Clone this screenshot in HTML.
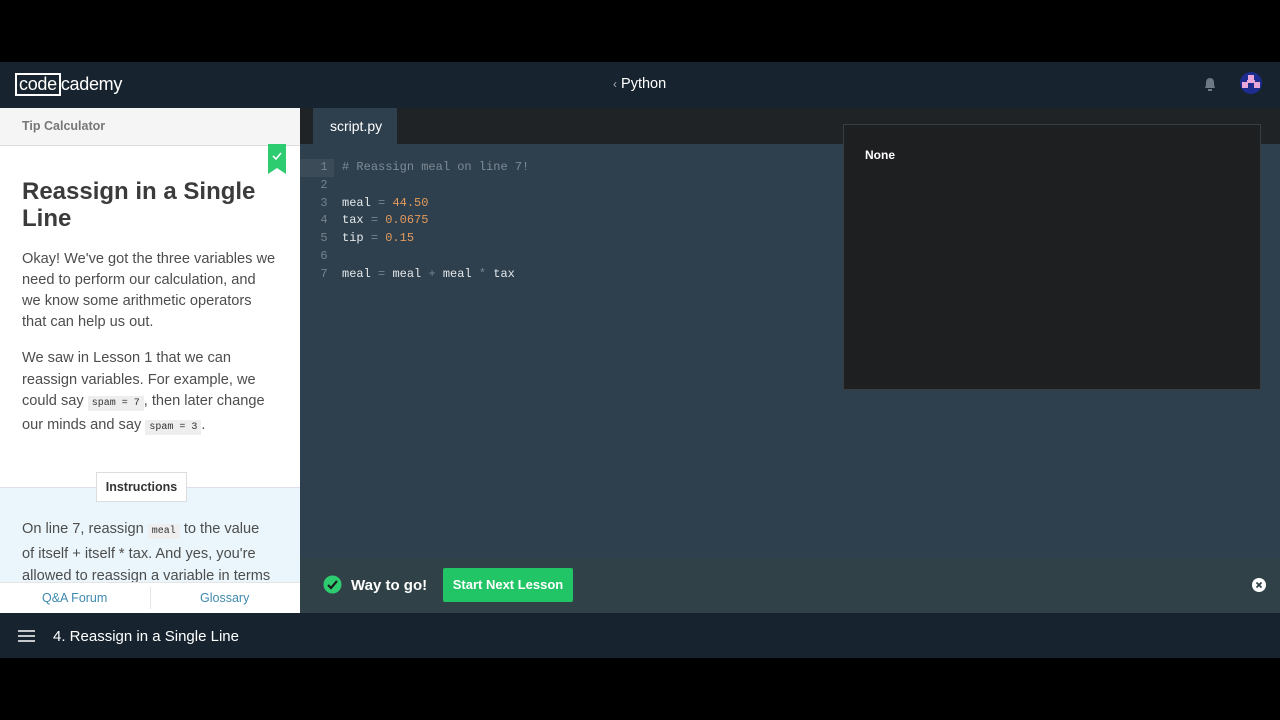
<!DOCTYPE html>
<html><head><meta charset="utf-8"><style>
*{margin:0;padding:0;box-sizing:border-box}
body{width:1280px;height:720px;background:#000;position:relative;overflow:hidden;font-family:"Liberation Sans",sans-serif}
.abs{position:absolute}
.mono{font-family:"Liberation Mono",monospace}
p.t{font-size:14.6px;line-height:21px;color:#4d4d4d;white-space:nowrap}
code{font-family:"Liberation Mono",monospace;font-size:10px;background:#eee;padding:2px 4px;color:#333}
</style></head><body>
<div class="abs" style="left:0;top:62px;width:1280px;height:46px;background:#17232f"></div>
<div class="abs" style="left:15px;top:73px;height:23px;font-size:18px;color:#fff;letter-spacing:-0.3px"><span style="border:2px solid #fff;padding:0 2px;line-height:19px;display:inline-block">code</span>cademy</div>
<div class="abs" style="left:613px;top:76px;color:#fff;font-size:14.5px"><span style="color:#aab;font-size:12px">‹</span> Python</div>
<svg class="abs" style="left:1203px;top:77px" width="14" height="15"><path d="M2 11 Q3 9 3 6 Q3 1 7 1 Q11 1 11 6 Q11 9 12 11 Z M5 12 h4 v2 h-4z" fill="#6d7a85"/></svg>
<div class="abs" style="left:1240px;top:72px;width:22px;height:22px;border-radius:50%;background:#1c2d8f"></div>
<svg class="abs" style="left:1242px;top:75px" width="18" height="16"><g fill="#e8a7d8"><rect x="6" y="0" width="6" height="5"/><rect x="0" y="7" width="6" height="6"/><rect x="12" y="7" width="6" height="6"/><rect x="5" y="5" width="8" height="3"/></g></svg>

<div class="abs" style="left:0;top:108px;width:300px;height:505px;background:#fff;overflow:hidden">
 <div style="height:38px;background:#f5f5f5;border-bottom:1px solid #ddd;padding:11px 22px;font-size:12.5px;font-weight:bold;color:#777">Tip Calculator</div>
 <svg class="abs" style="left:268px;top:36px" width="18" height="30"><path d="M0 0h18v30l-9-6-9 6z" fill="#2ecc71"/><path d="M5 12l3 3 5-6" stroke="#fff" stroke-width="1.6" fill="none"/></svg>
 <div class="abs" style="left:22px;top:70px;font-size:24px;line-height:27px;font-weight:bold;color:#3b3b3b;width:260px">Reassign in a Single Line</div>
 <p class="t abs" style="left:22px;top:141px">Okay! We've got the three variables we<br>need to perform our calculation, and<br>we know some arithmetic operators<br>that can help us out.</p>
 <p class="t abs" style="left:22px;top:240px;line-height:21.5px">We saw in Lesson 1 that we can<br>reassign variables. For example, we<br>could say <code>spam = 7</code>, then later change<br>our minds and say <code>spam = 3</code>.</p>
 <div class="abs" style="left:0;top:379px;width:300px;height:130px;background:#eaf6fb;border-top:1px solid #dde"></div>
 <div class="abs" style="left:96px;top:364px;width:91px;height:30px;background:#fff;border:1px solid #ddd;font-size:12.5px;font-weight:bold;color:#333;text-align:center;line-height:28px">Instructions</div>
 <p class="t abs" style="left:22px;top:410px;line-height:22px">On line 7, reassign <code>meal</code> to the value<br>of itself + itself * tax. And yes, you're<br>allowed to reassign a variable in terms<br>of itself!</p>
 <div class="abs" style="left:0;top:474px;width:300px;height:31px;background:#fff;border-top:1px solid #e5e5e5;font-size:12.5px;color:#3f8ab0">
  <span class="abs" style="left:42px;top:8px">Q&amp;A Forum</span>
  <div class="abs" style="left:150px;top:4px;width:1px;height:22px;background:#e5e5e5"></div>
  <span class="abs" style="left:200px;top:8px">Glossary</span>
 </div>
</div>

<div class="abs" style="left:300px;top:108px;width:980px;height:505px;background:#2e3f4d"></div>
<div class="abs" style="left:300px;top:108px;width:980px;height:36px;background:#1f2326"></div>
<div class="abs" style="left:313px;top:108px;width:84px;height:36px;background:#2e3f4d;color:#fff;font-size:14px;padding:10px 17px">script.py</div>
<div class="abs" style="left:300px;top:159px;width:34px;height:18px;background:#3c4b58"></div>
<div class="abs mono" style="left:306px;top:159px;font-size:12px;line-height:17.8px;color:#75838e;white-space:pre">  1  <span style="color:#7e8b96"># Reassign meal on line 7!</span>
  2
  3  <span style="color:#e4e8ea">meal</span> = <span style="color:#e19a5c">44.50</span>
  4  <span style="color:#e4e8ea">tax</span> = <span style="color:#e19a5c">0.0675</span>
  5  <span style="color:#e4e8ea">tip</span> = <span style="color:#e19a5c">0.15</span>
  6
  7  <span style="color:#e4e8ea">meal</span> = <span style="color:#e4e8ea">meal</span> + <span style="color:#e4e8ea">meal</span> * <span style="color:#e4e8ea">tax</span></div>
<div class="abs" style="left:843px;top:124px;width:418px;height:266px;background:#1e1f21;border:1px solid #3a3d40"></div>
<div class="abs" style="left:865px;top:148px;color:#fff;font-size:12px;font-weight:bold">None</div>

<div class="abs" style="left:300px;top:558px;width:980px;height:55px;background:#304247"></div>
<svg class="abs" style="left:323px;top:575px" width="19" height="19"><circle cx="9.5" cy="9.5" r="9" fill="#2ecc71"/><path d="M5 10l3 3 6-7" stroke="#1a1a1a" stroke-width="2.2" fill="none"/></svg>
<div class="abs" style="left:351px;top:577px;color:#fff;font-size:15px;font-weight:bold">Way to go!</div>
<div class="abs" style="left:443px;top:568px;width:130px;height:34px;background:#22c565;border-radius:2px;color:#fff;font-size:13px;font-weight:bold;text-align:center;line-height:34px">Start Next Lesson</div>
<svg class="abs" style="left:1252px;top:578px" width="14" height="14"><circle cx="7" cy="7" r="7" fill="#fff"/><path d="M4.5 4.5l5 5M9.5 4.5l-5 5" stroke="#304247" stroke-width="1.8"/></svg>

<div class="abs" style="left:0;top:613px;width:1280px;height:45px;background:#17232f"></div>
<svg class="abs" style="left:18px;top:630px" width="17" height="12"><path d="M0 1h17M0 6h17M0 11h17" stroke="#fff" stroke-width="1.5"/></svg>
<div class="abs" style="left:53px;top:628px;color:#fff;font-size:15px">4. Reassign in a Single Line</div>
</body></html>
